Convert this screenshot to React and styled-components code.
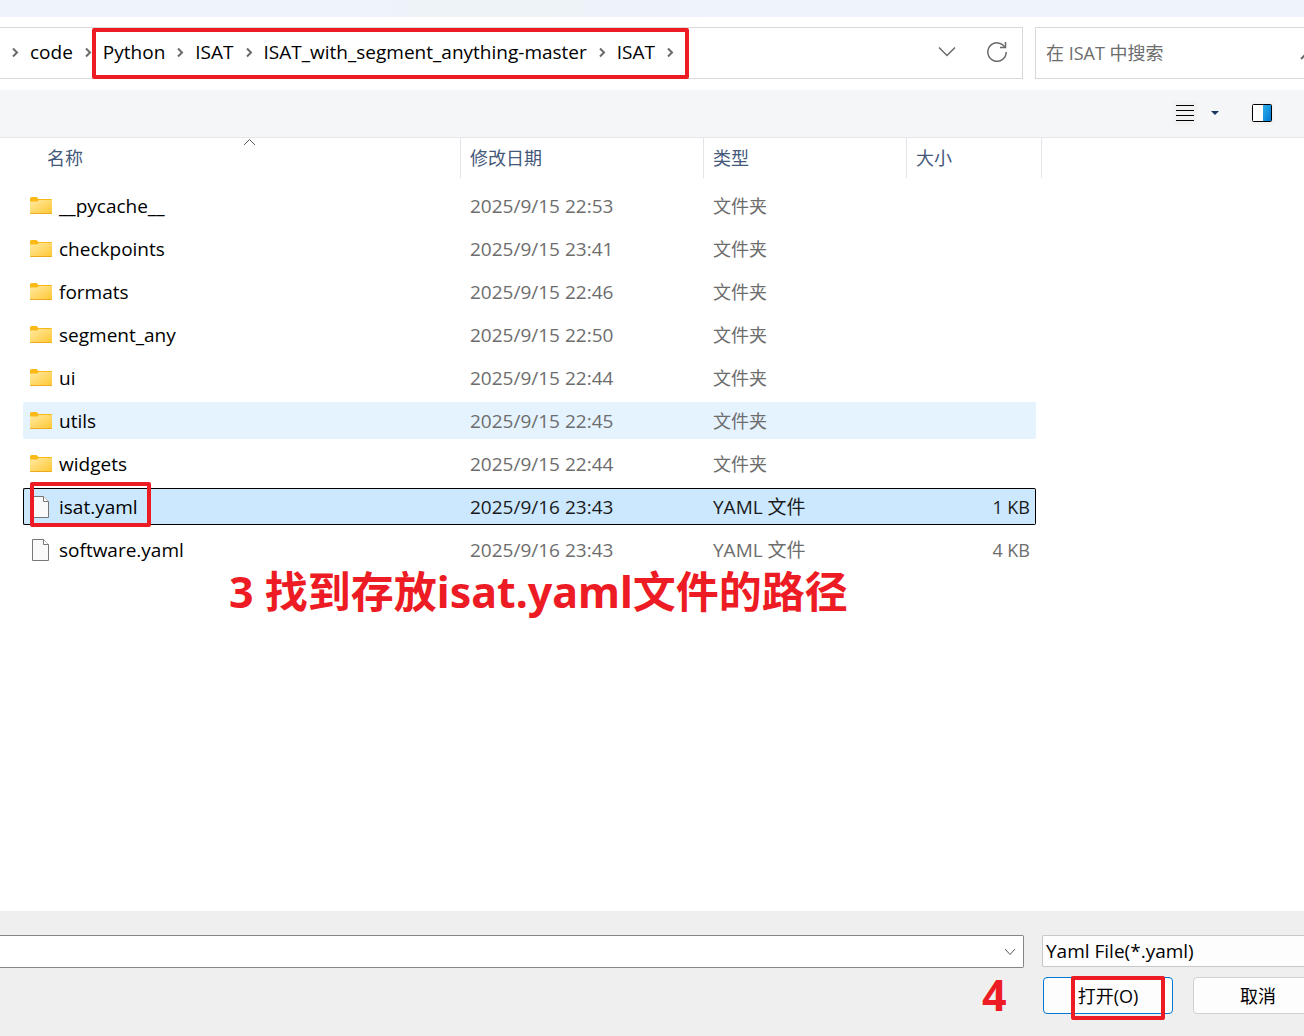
import React from "react";
import styled, { createGlobalStyle } from "styled-components";

const GlobalStyle = createGlobalStyle`
  * {
    box-sizing: border-box;
  }

  body {
    margin: 0;
    background: #ffffff;
    color: #000000;
    font-family: "Open Sans", "Noto Sans CJK SC", sans-serif;
    font-size: 18px;
  }

  button, input, select {
    font: inherit;
    color: inherit;
  }
`;

const Dialog = styled.main`
  display: flex;
  flex-direction: column;
  min-height: 100vh;
  overflow: hidden;
`;

const TitleStrip = styled.div`
  height: 17px;
  background: linear-gradient(90deg, #eff3fc 28%, #eef3f8 32%, #eef3f8 42%, #eef3fc 54%);
`;

const NavBar = styled.div`
  display: flex;
  gap: 12px;
  padding: 10px 0 11px;
`;

const AddressBar = styled.nav`
  flex: 1;
  display: flex;
  align-items: center;
  height: 52px;
  padding: 0 13px 2px 0;
  border: 1px solid #d9d9d9;
  border-left: 0;
`;

const Crumbs = styled.div`
  position: relative;
  display: flex;
  align-items: center;
`;

const Crumb = styled.button`
  padding: 0;
  border: 0;
  background: none;
  font-size: 19px;
  line-height: 24px;
  white-space: nowrap;
`;

const CrumbArrow = styled.svg`
  width: 30px;
  height: 12px;
  margin-top: 2px;
  flex: none;
`;

const AddressTools = styled.div`
  display: flex;
  gap: 26px;
  margin-left: auto;
`;

const IconButton = styled.button`
  display: flex;
  align-items: center;
  justify-content: center;
  width: 24px;
  height: 24px;
  padding: 0;
  border: 0;
  border-radius: 2px;
  background: ${(p) => (p.$raised ? "#f2f2f2" : "none")};
`;

const SearchBox = styled.label`
  display: flex;
  align-items: center;
  flex: none;
  width: 269px;
  height: 52px;
  padding-left: 10px;
  border: 1px solid #d9d9d9;
  border-right: 0;
  overflow: hidden;

  svg {
    flex: none;
  }
`;

const SearchInput = styled.input`
  flex: none;
  width: 254px;
  padding: 0;
  border: 0;
  outline: 0;
  background: none;

  &::placeholder {
    color: #6d6d6d;
    opacity: 1;
  }
`;

const Toolbar = styled.div`
  display: flex;
  align-items: center;
  justify-content: flex-end;
  height: 48px;
  padding: 0 30px 2px 0;
  background: #f5f6f8;
  border-bottom: 1px solid #e5e7ea;
`;

const ToolGroup = styled.div`
  display: flex;
  gap: 6px;
  margin-right: 23px;
`;

const FilePane = styled.section`
  position: relative;
  flex: 1;
  padding-left: 23px;
`;

const FileTable = styled.table`
  table-layout: fixed;
  width: 1019px;
  border-collapse: collapse;
`;

const HeadCell = styled.th`
  position: relative;
  width: ${(p) => p.$width}px;
  height: 46px;
  padding: 0;
  text-align: left;
  vertical-align: top;
  font-weight: 400;
  color: #44597a;
`;

const HeadLabel = styled.div`
  height: 40px;
  padding: 7px 0 0 ${(p) => p.$indent}px;
  border-right: 1px solid #e3e5e8;
  line-height: 26px;
`;

const SortMark = styled.svg`
  position: absolute;
  top: 0;
  left: 220px;
`;

const Cell = styled.td`
  padding: 3px 0;
`;

const CellBox = styled.div`
  display: flex;
  align-items: center;
  height: 37px;
  padding-left: 9px;
  color: #6d6d6d;
  font-size: ${(p) => (p.$latin ? 19 : 18)}px;
  line-height: 26px;
  white-space: nowrap;
`;

const NameBox = styled(CellBox)`
  padding-left: 7px;
  color: #000000;
  font-size: 19px;

  svg {
    flex: none;
    margin-right: 7px;
  }
`;

const SizeBox = styled(CellBox)`
  justify-content: flex-end;
  margin-right: 6px;
  padding-right: 6px;
`;

const Row = styled.tr`
  ${CellBox} {
    background: ${(p) => (p.$state === "selected" ? "#cce8ff" : p.$state === "hover" ? "#e5f3ff" : "none")};
    ${(p) =>
      p.$state === "selected" &&
      `
      color: #1a1a1a;
      border: solid #000000;
      border-width: 1px 0;
    `}
  }

  ${NameBox} {
    border-radius: 2px 0 0 2px;
    ${(p) => p.$state === "selected" && "color: #000000; border-left-width: 1px; padding-left: 6px;"}
  }

  ${SizeBox} {
    border-radius: 0 2px 2px 0;
    ${(p) => p.$state === "selected" && "border-right-width: 1px; padding-right: 5px;"}
  }
`;

const Marker = styled.span`
  position: absolute;
  top: ${(p) => p.$top}px;
  left: ${(p) => p.$left}px;
  width: ${(p) => p.$width}px;
  height: ${(p) => p.$height}px;
  border: 4px solid #ed1c24;
  border-radius: 2px;
  pointer-events: none;
`;

const Note = styled.p`
  position: absolute;
  top: ${(p) => p.$top}px;
  left: ${(p) => p.$left}px;
  margin: 0;
  color: #ed1c24;
  font-family: "Noto Sans", "Noto Sans CJK SC", sans-serif;
  font-size: 43px;
  font-weight: 700;
  line-height: 56px;
  white-space: nowrap;
`;

const Footer = styled.footer`
  display: flex;
  gap: 18px;
  height: 125px;
  padding-top: 24px;
  background: #efefef;
`;

const FileNameBox = styled.div`
  flex: 1;
  display: flex;
  align-items: center;
  height: 33px;
  padding-right: 1px;
  background: #ffffff;
  border: 1px solid #868686;
  border-left: 0;
  border-radius: 0 2px 2px 0;
`;

const FileNameInput = styled.input`
  flex: 1;
  min-width: 0;
  padding: 0 8px;
  border: 0;
  outline: 0;
  background: none;
`;

const Actions = styled.div`
  position: relative;
  display: flex;
  flex-direction: column;
  gap: 10px;
  width: 262px;
  flex: none;
`;

const TypeSelect = styled.select`
  appearance: none;
  width: 100%;
  height: 32px;
  padding: 0 3px;
  border: 1px solid #c8c8c8;
  border-right: 0;
  border-radius: 2px 0 0 2px;
  background: #fdfdfd;
  font-size: 19px;
`;

const ButtonRow = styled.div`
  display: flex;
  gap: 20px;
  padding-left: 1px;
`;

const DialogButton = styled.button`
  position: relative;
  flex: none;
  width: 130px;
  height: 37px;
  padding: 0 0 2px;
  border: 1px solid ${(p) => (p.$primary ? "#0078d4" : "#d0d0d0")};
  border-radius: 4px;
  background: #fdfdfd;
`;

const files = [
  { name: "__pycache__", date: "2025/9/15 22:53", folder: true },
  { name: "checkpoints", date: "2025/9/15 23:41", folder: true },
  { name: "formats", date: "2025/9/15 22:46", folder: true },
  { name: "segment_any", date: "2025/9/15 22:50", folder: true },
  { name: "ui", date: "2025/9/15 22:44", folder: true },
  { name: "utils", date: "2025/9/15 22:45", folder: true, state: "hover" },
  { name: "widgets", date: "2025/9/15 22:44", folder: true },
  { name: "isat.yaml", date: "2025/9/16 23:43", size: "1 KB", state: "selected" },
  { name: "software.yaml", date: "2025/9/16 23:43", size: "4 KB" },
];

const columns = [
  { label: "名称", width: 438, indent: 24 },
  { label: "修改日期", width: 243, indent: 9 },
  { label: "类型", width: 203, indent: 9 },
  { label: "大小", width: 135, indent: 9 },
];

const Arrow = () => (
  <CrumbArrow viewBox="0 0 12 12" fill="none" stroke="#6a6a6a" strokeWidth="2">
    <path d="M4 1.500 8 5.500 4 9.500" />
  </CrumbArrow>
);

const FolderIcon = () => (
  <svg width="22" height="18" viewBox="0 0 22 18">
    <defs>
      <linearGradient id="folder" x1="0" y1="0" x2="1" y2="1">
        <stop offset="0" stopColor="#ffe9a2" />
        <stop offset="1" stopColor="#ffc833" />
      </linearGradient>
    </defs>
    <path d="M0 1.500Q0 0 1.500 0H6.500L8.500 2H21Q22 2 22 3V6H0Z" fill="#fbb917" />
    <path d="M0 4.500H7L9 3H22V16Q22 17 21 17H1Q0 17 0 16Z" fill="url(#folder)" />
    <path d="M0 16H22Q22 17 21 17H1Q0 17 0 16Z" fill="#efa91c" />
  </svg>
);

const PageIcon = () => (
  <svg width="22" height="22" viewBox="0 0 22 22" fill="#fafafa" stroke="#777777">
    <path d="M2.500 .5H13.500L18.500 5.500V21.500H2.500Z" />
    <path d="M13.500 .5V5.500H18.500" fill="#ffffff" />
  </svg>
);

const App = () => {
  return (
    <>
      <GlobalStyle />
      <Dialog>
        <TitleStrip />
        <NavBar>
          <AddressBar aria-label="Address">
            <Crumbs>
              <Arrow />
              <Crumb>code</Crumb>
              <Arrow />
            </Crumbs>
            <Crumbs>
              <Crumb>Python</Crumb>
              <Arrow />
              <Crumb>ISAT</Crumb>
              <Arrow />
              <Crumb>ISAT_with_segment_anything-master</Crumb>
              <Arrow />
              <Crumb>ISAT</Crumb>
              <Arrow />
              <Marker $top={-12} $left={-11} $width={597} $height={51} />
            </Crumbs>
            <AddressTools>
              <IconButton aria-label="Recent locations">
                <svg width="18" height="12" viewBox="0 0 18 12" fill="none" stroke="#6a6a6a" strokeWidth="1.500">
                  <path d="M1 1.500 9 9.500 17 1.500" />
                </svg>
              </IconButton>
              <IconButton aria-label="Refresh">
                <svg width="22" height="22" viewBox="0 0 22 22" fill="none" stroke="#6a6a6a" strokeWidth="1.500">
                  <path d="M19 6.500A9.200 9.200 0 1 0 20.200 11" />
                  <path d="M19.500 1V6.500H14" />
                </svg>
              </IconButton>
            </AddressTools>
          </AddressBar>
          <SearchBox>
            <SearchInput placeholder="在 ISAT 中搜索" aria-label="Search" />
            <svg width="20" height="20" viewBox="0 0 20 20" fill="none" stroke="#6a6a6a" strokeWidth="2">
              <path d="M1 16 8 9" />
              <circle cx="12" cy="6" r="5" />
            </svg>
          </SearchBox>
        </NavBar>

        <Toolbar>
          <ToolGroup>
            <IconButton $raised aria-label="View">
              <svg width="18" height="18" viewBox="0 0 18 18" stroke="#000000">
                <path d="M0 1.500H18M0 6.500H18M0 11.500H18M0 16.500H18" />
              </svg>
            </IconButton>
            <IconButton aria-label="View options">
              <svg width="8" height="4" viewBox="0 0 8 4" fill="#1b3560">
                <path d="M0 0H8L4 4Z" />
              </svg>
            </IconButton>
          </ToolGroup>
          <IconButton $raised aria-label="Preview pane">
            <svg width="20" height="18" viewBox="0 0 20 18">
              <defs>
                <linearGradient id="pane" x1="0" y1="0" x2="1" y2="1">
                  <stop offset="0" stopColor="#2fb0ea" />
                  <stop offset="1" stopColor="#0078d4" />
                </linearGradient>
              </defs>
              <rect x="1" y="1" width="18" height="16" fill="#ffffff" />
              <rect x="11" y="1" width="8" height="16" fill="url(#pane)" />
              <rect x=".5" y=".5" width="19" height="17" rx="1" fill="none" stroke="#000000" />
            </svg>
          </IconButton>
        </Toolbar>

        <FilePane>
          <FileTable>
            <thead>
              <tr>
                {columns.map((col, i) => (
                  <HeadCell key={col.label} $width={col.width}>
                    <HeadLabel $indent={col.indent}>{col.label}</HeadLabel>
                    {i === 0 && (
                      <SortMark width="13" height="8" viewBox="0 0 13 8" fill="none" stroke="#5a5a5a">
                        <path d="M1 7 6.500 1.500 12 7" />
                      </SortMark>
                    )}
                  </HeadCell>
                ))}
              </tr>
            </thead>
            <tbody>
              {files.map((file) => (
                <Row key={file.name} $state={file.state}>
                  <Cell>
                    <NameBox>
                      {file.folder ? <FolderIcon /> : <PageIcon />}
                      {file.name}
                    </NameBox>
                  </Cell>
                  <Cell>
                    <CellBox $latin>{file.date}</CellBox>
                  </Cell>
                  <Cell>
                    <CellBox $latin={!file.folder}>{file.folder ? "文件夹" : "YAML 文件"}</CellBox>
                  </Cell>
                  <Cell>
                    <SizeBox>{file.size}</SizeBox>
                  </Cell>
                </Row>
              ))}
            </tbody>
          </FileTable>
          <Marker $top={344} $left={30} $width={121} $height={45} />
          <Note $top={426} $left={229}>3 找到存放isat.yaml文件的路径</Note>
        </FilePane>

        <Footer>
          <FileNameBox>
            <FileNameInput aria-label="File name" />
            <IconButton aria-label="File name history">
              <svg width="12" height="8" viewBox="0 0 12 8" fill="none" stroke="#5a5a5a">
                <path d="M1 1 6 6.500 11 1" />
              </svg>
            </IconButton>
          </FileNameBox>
          <Actions>
            <TypeSelect aria-label="File type">
              <option>Yaml File(*.yaml)</option>
            </TypeSelect>
            <ButtonRow>
              <DialogButton $primary>
                打开(O)
                <Marker $top={-2} $left={27} $width={94} $height={44} />
              </DialogButton>
              <DialogButton>取消</DialogButton>
            </ButtonRow>
            <Note $top={32} $left={-60}>4</Note>
          </Actions>
        </Footer>
      </Dialog>
    </>
  );
};

export default App;
